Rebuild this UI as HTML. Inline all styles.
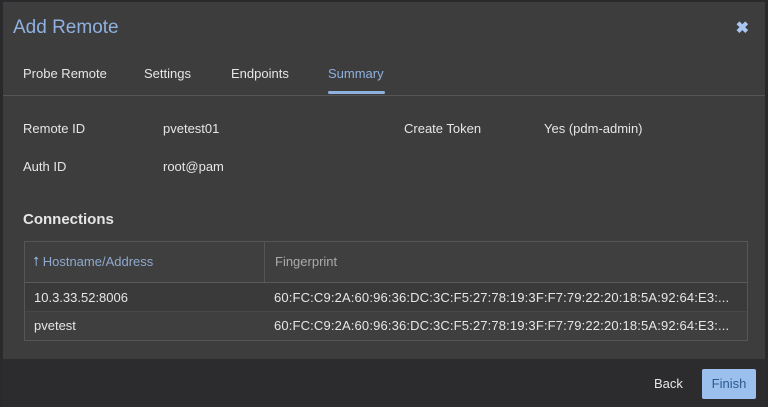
<!DOCTYPE html>
<html><head><style>
body{margin:0;width:768px;height:407px;background:#2a2a2c;font-family:"Liberation Sans",sans-serif;overflow:hidden;position:relative}
.dlg{position:absolute;left:3px;top:2px;width:762px;height:405px;background:#3d3d3d}
.t{position:absolute;color:#e6e6e6;font-size:13px;white-space:nowrap}
.title{position:absolute;left:10px;top:15px;font-size:19px;color:#8fb1e0}
.x{position:absolute;right:16px;top:16px;color:#a9c6f0;font-size:16px;font-weight:bold}
.sep{position:absolute;left:0;top:93px;width:762px;height:1px;background:#555}
.ul{position:absolute;left:325px;top:89px;width:57px;height:3px;background:#8fb1e0;border-radius:2px}
.foot{position:absolute;left:0;top:357px;width:762px;height:48px;background:#2c2c2e}
.tbl{position:absolute;left:21px;top:239px;width:722px;height:98px;border:1px solid #565656;background:#3a3a3a}
.hdr{position:absolute;left:0;top:0;width:722px;height:40px;background:#3f3f3f;border-bottom:1px solid #5a5a5a}
.row2{position:absolute;left:0;top:69px;width:722px;height:28px;background:#3f3f3f;border-top:1px solid #474747}
.vl{position:absolute;left:239px;top:0;width:1px;height:40px;background:#555}
.btn{position:absolute;left:699px;top:367px;width:54px;height:30px;background:#9cc0ee;border-radius:2px;color:#2f5a8c;font-size:13px;text-align:center;line-height:30px}
.fp{letter-spacing:0.15px}
</style></head><body>
<div class="dlg">
<div class="title">Add Remote</div>
<div class="x">✖</div>
<div class="t" style="left:20px;top:64px">Probe Remote</div>
<div class="t" style="left:141px;top:64px">Settings</div>
<div class="t" style="left:228px;top:64px">Endpoints</div>
<div class="t" style="left:325px;top:64px;color:#8fb1e0">Summary</div>
<div class="ul"></div>
<div class="sep"></div>
<div class="t" style="left:20px;top:119px">Remote ID</div>
<div class="t" style="left:160px;top:119px">pvetest01</div>
<div class="t" style="left:401px;top:119px">Create Token</div>
<div class="t" style="left:541px;top:119px">Yes (pdm-admin)</div>
<div class="t" style="left:20px;top:157px">Auth ID</div>
<div class="t" style="left:160px;top:157px">root@pam</div>
<div class="t" style="left:20px;top:209px;font-size:15px;font-weight:bold">Connections</div>
<div class="tbl">
<div class="hdr"><div class="vl"></div></div>
<div class="row2"></div>
<div class="t" style="left:8px;top:12px;color:#8fa9cf">⭡ Hostname/Address</div>
<div class="t" style="left:250px;top:12px;color:#aaa">Fingerprint</div>
<div class="t" style="left:9px;top:48px">10.3.33.52:8006</div>
<div class="t fp" style="left:249px;top:48px">60:FC:C9:2A:60:96:36:DC:3C:F5:27:78:19:3F:F7:79:22:20:18:5A:92:64:E3:...</div>
<div class="t" style="left:9px;top:76px">pvetest</div>
<div class="t fp" style="left:249px;top:76px">60:FC:C9:2A:60:96:36:DC:3C:F5:27:78:19:3F:F7:79:22:20:18:5A:92:64:E3:...</div>
</div>
<div class="foot"></div>
<div class="t" style="left:651px;top:374px">Back</div>
<div class="btn">Finish</div>
</div>
</body></html>
